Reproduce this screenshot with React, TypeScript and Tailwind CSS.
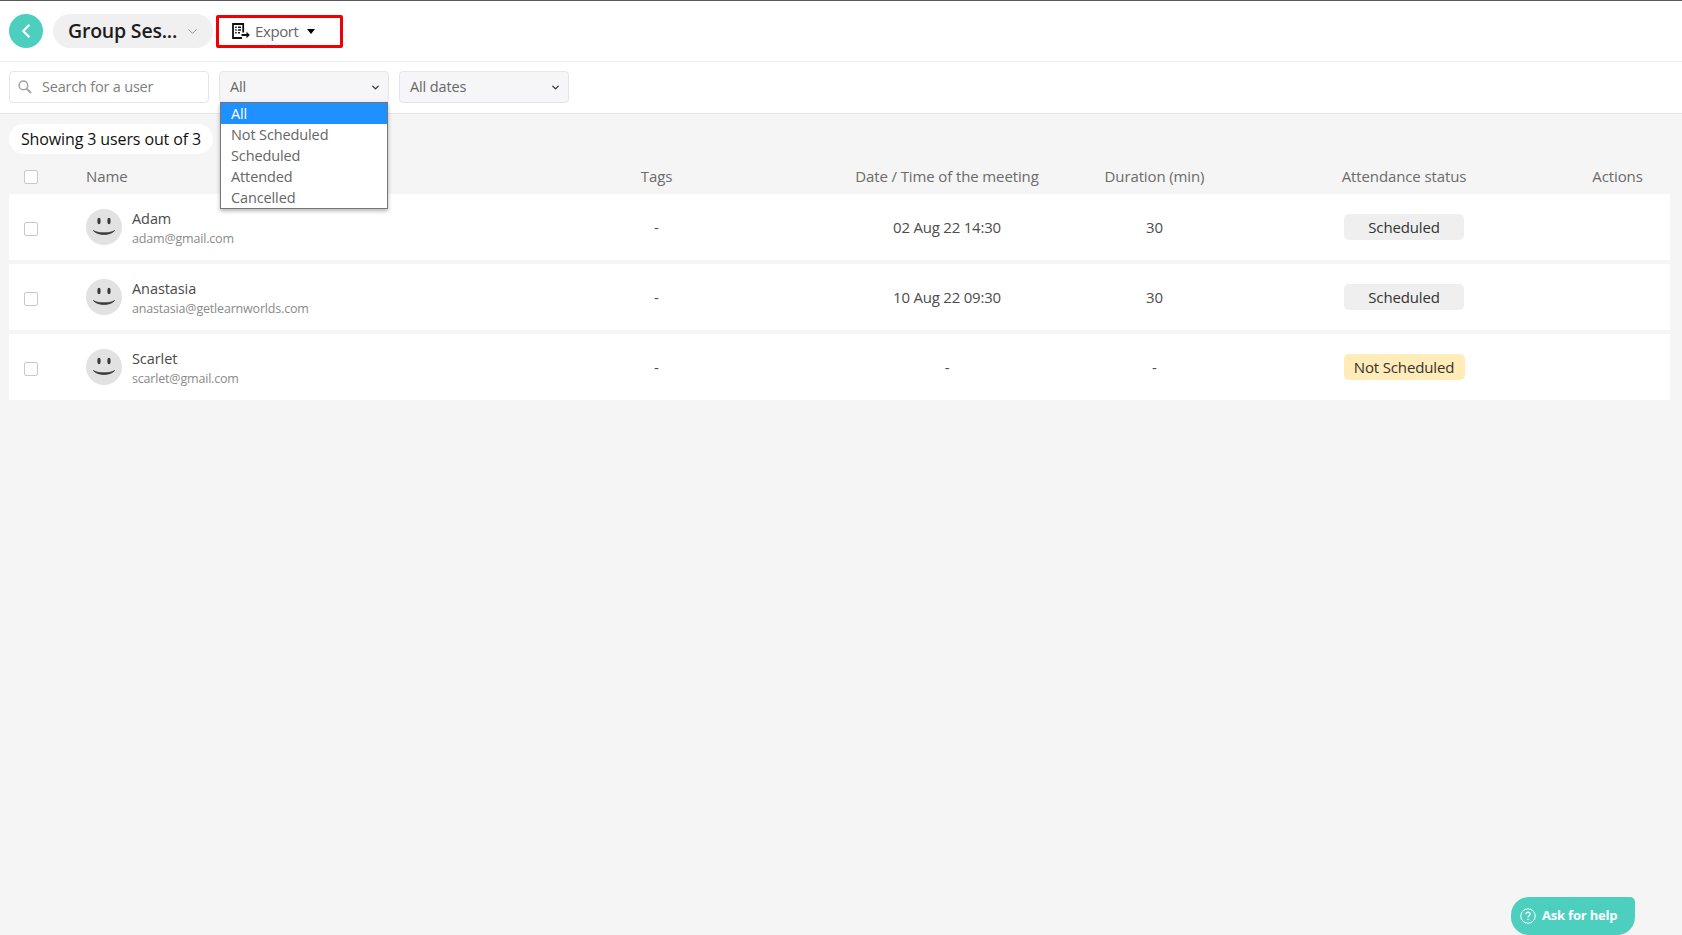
import { ChevronDown, ChevronLeft } from "lucide-react";

const users = [
  { name: "Adam", email: "adam@gmail.com", date: "02 Aug 22 14:30", duration: "30", status: "Scheduled" },
  { name: "Anastasia", email: "anastasia@getlearnworlds.com", date: "10 Aug 22 09:30", duration: "30", status: "Scheduled" },
  { name: "Scarlet", email: "scarlet@gmail.com", date: "-", duration: "-", status: "Not Scheduled" },
];

const options = ["All", "Not Scheduled", "Scheduled", "Attended", "Cancelled"];

const gridCols = "grid grid-cols-[77px_384px_373px_208px_207px_292px_1fr] items-center";

function Smiley() {
  return (
    <svg viewBox="0 0 36 36" className="h-9 w-9 shrink-0">
      <circle cx="18" cy="18" r="18" fill="#e2e2e2" />
      <ellipse cx="13" cy="12" rx="1.6" ry="3.2" fill="#3a3a3a" />
      <ellipse cx="23" cy="12" rx="1.6" ry="3.2" fill="#3a3a3a" />
      <path d="M7.3 21.5 C11.5 26.8 24.5 26.8 28.7 21.5 C24.5 24.6 11.5 24.6 7.3 21.5 Z" fill="#3a3a3a" stroke="#3a3a3a" strokeWidth="0.8" strokeLinejoin="round" />
    </svg>
  );
}

function ExportIcon() {
  return (
    <svg viewBox="0 0 18 16" className="h-[16px] w-[18px]" fill="none">
      <path d="M11.2 9.5V1H1v14h9" stroke="#111111" strokeWidth="1.8" />
      <path d="M3.2 4.2h1.5M6 4.2h3M3.2 7h1.5M6 7h3M3.2 9.8h1.5M6 9.8h2" stroke="#111111" strokeWidth="1.5" />
      <path d="M9.5 11h5V8.7l3.4 3.3-3.4 3.3V13h-5z" fill="#111111" />
    </svg>
  );
}

function SearchIcon() {
  return (
    <svg viewBox="0 0 14 14" className="h-[14px] w-[14px]" fill="none">
      <circle cx="5.4" cy="5.4" r="4.3" stroke="#a3a3a3" strokeWidth="1.5" />
      <path d="M8.6 8.6 13 13" stroke="#a3a3a3" strokeWidth="2" />
    </svg>
  );
}

function Checkbox() {
  return <div className="h-[14px] w-[14px] rounded-[2px] border border-[#c9c9c9] bg-white" />;
}

export default function App() {
  return (
    <div className="relative flex h-[935px] flex-col overflow-hidden bg-[#f5f5f5] font-['Open_Sans',sans-serif] text-[15px] text-[#4d4d4d]">
      {/* Top bar */}
      <header className="flex h-[62px] shrink-0 items-center border-t border-t-[#5a5a5a] border-b border-b-[#eeeeee] bg-white pl-[9px]">
        <button className="flex h-[34px] w-[34px] items-center justify-center rounded-full bg-[#4dcfc0]">
          <ChevronLeft className="h-[22px] w-[22px] text-white" strokeWidth={2.5} />
        </button>
        <div className="ml-[10px] flex h-[34px] w-[160px] items-center rounded-full bg-[#f0f0f0] pl-[15px]">
          <span className="text-[19.5px] font-semibold tracking-[-0.2px] text-[#1d1d1d]">Group Ses...</span>
          <ChevronDown className="ml-[8px] h-[15px] w-[15px] text-[#8b8b8b]" strokeWidth={1.5} />
        </div>
        <div className="ml-[3px] flex h-[33px] w-[127px] items-center rounded-[2px] border-[3px] border-[#f00000] pl-[13px]">
          <ExportIcon />
          <span className="ml-[5px] text-[15px] tracking-[-0.4px] text-[#666666]">Export</span>
          <span className="ml-[9px] h-0 w-0 border-x-[4.5px] border-t-[5px] border-x-transparent border-t-black" />
        </div>
      </header>

      {/* Filters */}
      <div className="relative flex h-[52px] shrink-0 items-center border-b border-[#e6e6e6] bg-white pb-[1px] pl-[9px]">
        <div className="flex h-[32px] w-[200px] items-center rounded-[4px] border border-[#e3e6ee] bg-white pl-[8px]">
          <SearchIcon />
          <span className="ml-[10px] text-[14.5px] tracking-[-0.2px] text-[#808080]">Search for a user</span>
        </div>
        <div className="ml-[10px] flex h-[32px] w-[170px] items-center justify-between rounded-[4px] border border-[#e3e6ee] bg-[#f6f6f8] pl-[10px] pr-[7px]">
          <span className="text-[14.5px] tracking-[-0.12px] text-[#666666]">All</span>
          <ChevronDown className="h-[11px] w-[11px] text-[#333333]" strokeWidth={3} />
        </div>
        <div className="ml-[10px] flex h-[32px] w-[170px] items-center justify-between rounded-[4px] border border-[#e3e6ee] bg-[#f6f6f8] pl-[10px] pr-[7px]">
          <span className="text-[14.5px] tracking-[-0.12px] text-[#666666]">All dates</span>
          <ChevronDown className="h-[11px] w-[11px] text-[#333333]" strokeWidth={3} />
        </div>

        {/* Open select list */}
        <div className="absolute left-[220px] top-[40px] z-10 w-[168px] border border-[#767676] bg-white shadow-[0_2px_4px_rgba(0,0,0,0.3)]">
          {options.map((option, i) => (
            <div
              key={option}
              className={`h-[21px] pl-[10px] text-[14.5px] leading-[21px] tracking-[-0.12px] ${
                i === 0 ? "bg-[#1e90ff] text-white" : "text-[#666666]"
              }`}
            >
              {option}
            </div>
          ))}
        </div>
      </div>

      {/* Users table */}
      <main className="flex flex-col pl-[9px] pr-[12px] pt-[10px]">
        <div className="flex h-[30px] w-[204px] items-center justify-center rounded-full bg-white text-[16px] font-medium tracking-[-0.12px] text-[#111111]">
          Showing 3 users out of 3
        </div>

        <div className={`${gridCols} mt-[6px] h-[34px] pb-[1px] font-medium tracking-[-0.12px] text-[#6b6b6b]`}>
          <div className="pl-[15px] pt-[1px]">
            <Checkbox />
          </div>
          <div>Name</div>
          <div className="text-center">Tags</div>
          <div className="text-center">Date / Time of the meeting</div>
          <div className="text-center">Duration (min)</div>
          <div className="text-center">Attendance status</div>
          <div className="pl-[15px] text-center">Actions</div>
        </div>

        <div className="flex flex-col gap-[4px]">
          {users.map((user) => (
            <div key={user.email} className={`${gridCols} h-[66px] bg-white`}>
              <div className="pl-[15px] pt-[3px]">
                <Checkbox />
              </div>
              <div className="flex items-center">
                <Smiley />
                <div className="ml-[10px] flex flex-col pt-[2px]">
                  <span className="text-[14.5px] font-medium leading-[20px] tracking-[-0.08px] text-[#4a4a4a]">{user.name}</span>
                  <span className="mt-[1px] text-[12.5px] leading-[18px] tracking-[-0.18px] text-[#8a8a8a]">{user.email}</span>
                </div>
              </div>
              <div className="text-center">-</div>
              <div className="text-center tracking-[-0.22px]">{user.date}</div>
              <div className="text-center">{user.duration}</div>
              <div className="flex justify-center">
                <span
                  className={`flex h-[26px] items-center justify-center rounded-[5px] tracking-[-0.15px] text-[#333333] ${
                    user.status === "Scheduled" ? "w-[120px] bg-[#efefef]" : "w-[121px] bg-[#ffecb8]"
                  }`}
                >
                  {user.status}
                </span>
              </div>
              <div />
            </div>
          ))}
        </div>
      </main>

      {/* Help */}
      <button className="absolute left-[1511px] top-[897px] flex h-[38px] w-[124px] items-center rounded-l-[18px] rounded-br-[18px] rounded-tr-[5px] bg-[#4dcfc0] pl-[9px] font-['Open_Sans',sans-serif] text-[13px] font-bold text-white">
        <svg viewBox="0 0 16 16" className="h-4 w-4" fill="none">
          <circle cx="8" cy="8" r="7.2" stroke="white" strokeWidth="1" />
          <path d="M5.9 6.2c0-1.2.9-2 2.1-2s2.1.8 2.1 1.9c0 1.7-2.1 1.6-2.1 3.3" stroke="white" strokeWidth="1.2" />
          <circle cx="8" cy="11.5" r="0.8" fill="white" />
        </svg>
        <span className="ml-[6px] tracking-[-0.2px]">Ask for help</span>
      </button>
    </div>
  );
}
